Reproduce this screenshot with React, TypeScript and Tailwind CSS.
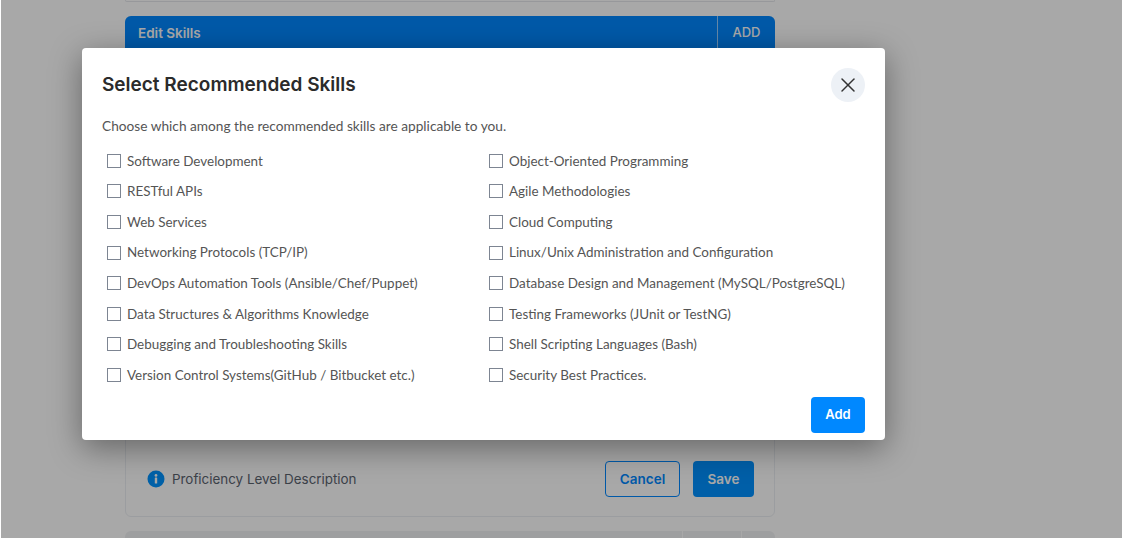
import { X } from "lucide-react";

const leftSkills = [
  "Software Development",
  "RESTful APIs",
  "Web Services",
  "Networking Protocols (TCP/IP)",
  "DevOps Automation Tools (Ansible/Chef/Puppet)",
  "Data Structures & Algorithms Knowledge",
  "Debugging and Troubleshooting Skills",
  "Version Control Systems(GitHub / Bitbucket etc.)",
];

const rightSkills = [
  "Object-Oriented Programming",
  "Agile Methodologies",
  "Cloud Computing",
  "Linux/Unix Administration and Configuration",
  "Database Design and Management (MySQL/PostgreSQL)",
  "Testing Frameworks (JUnit or TestNG)",
  "Shell Scripting Languages (Bash)",
  "Security Best Practices.",
];

function SkillRow({ label }: { label: string }) {
  return (
    <label className="flex h-[30.57px] items-center gap-[6px] pl-[5px]">
      <span className="h-[14px] w-[14px] shrink-0 border border-[#7d8592] bg-white" />
      <span className="font-['Lato',sans-serif] text-[13.45px] whitespace-nowrap text-[#555]">{label}</span>
    </label>
  );
}

export default function App() {
  return (
    <div className="relative h-[538px] w-[1122px] overflow-hidden bg-white font-['Inter',sans-serif]">
      {/* page behind the dialog */}
      <div className="ml-[125px] flex w-[650px] flex-col">
        <div className="h-[2px] rounded-b-md border border-t-0 border-[#e5e7eb]" />
        <div className="mt-[14px] flex h-[501px] flex-col rounded-md border border-[#eceff3]">
          <div className="-mx-px -mt-px flex h-[34px] items-center justify-between rounded-t-md bg-[#0088ff]">
            <span className="pl-[13px] text-[13.5px] font-semibold text-white">Edit Skills</span>
            <span className="flex h-full w-[58px] items-center justify-center border-l border-white/60 text-[13px] font-medium text-white">
              ADD
            </span>
          </div>
          <div className="mt-auto flex items-center justify-between pr-5 pb-[19px] pl-[21px]">
            <div className="flex items-center gap-[7px]">
              <svg width="18" height="18" viewBox="0 0 18 18">
                <circle cx="9" cy="9" r="8.5" fill="#0093ff" />
                <rect x="7.8" y="7.6" width="2.4" height="6" rx="0.4" fill="white" />
                <circle cx="9" cy="5.4" r="1.4" fill="white" />
              </svg>
              <span className="text-[13.4px] text-[#5c6470]">Proficiency Level Description</span>
            </div>
            <div className="flex gap-[13px]">
              <button className="h-9 w-[75px] rounded border border-[#0088ff] text-[13.5px] font-semibold text-[#0088ff]">
                Cancel
              </button>
              <button className="h-9 w-[61px] rounded bg-[#0091ff] text-[13.5px] font-semibold text-white">Save</button>
            </div>
          </div>
        </div>
        <div className="mt-[14px] flex h-8 justify-end rounded-t-md bg-[#f0f1f3]">
          <div className="w-[59px] border-l border-white" />
          <div className="w-[34px] border-l border-white" />
        </div>
      </div>

      {/* overlay */}
      <div className="absolute inset-y-0 right-0 left-[1px] bg-black/34" />

      {/* dialog */}
      <div className="absolute top-[48px] left-[82px] h-[392px] w-[803px] rounded bg-white px-5 pt-5 shadow-[0_8px_32px_rgba(0,0,0,0.4)]">
        <div className="flex items-center justify-between">
          <h2 className="text-[19px] font-semibold text-[#2b2b2b]">Select Recommended Skills</h2>
          <button className="flex h-[34px] w-[34px] items-center justify-center rounded-full bg-[#edf1f6] text-[#333]">
            <X size={24} strokeWidth={1.5} />
          </button>
        </div>
        <p className="mt-[14px] font-['Lato',sans-serif] text-[13.7px] text-[#555]">
          Choose which among the recommended skills are applicable to you.
        </p>
        <div className="mt-[9px] grid grid-cols-[382px_1fr]">
          <div>
            {leftSkills.map((s) => (
              <SkillRow key={s} label={s} />
            ))}
          </div>
          <div>
            {rightSkills.map((s) => (
              <SkillRow key={s} label={s} />
            ))}
          </div>
        </div>
        <button className="absolute right-5 bottom-[7px] h-9 w-[54px] rounded bg-[#0088ff] text-[13px] font-semibold text-white">
          Add
        </button>
      </div>
    </div>
  );
}
